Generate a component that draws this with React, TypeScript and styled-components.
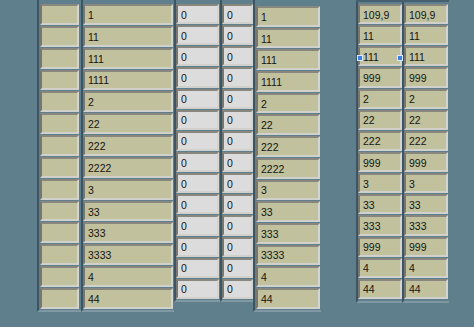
import { createGlobalStyle } from 'styled-components';
import styled from 'styled-components';

const GlobalStyle = createGlobalStyle`
  html, body {
    margin: 0;
    padding: 0;
    background: #5f7f8c;
    font-family: "Liberation Sans", Arial, sans-serif;
  }
`;

type Tone = 'khaki' | 'gray';

const Page = styled.div`
  position: relative;
  display: flex;
  align-items: flex-start;
  width: 474px;
  height: 327px;
  padding-left: 37px;
  box-sizing: border-box;
  overflow: hidden;
`;

const Group = styled.div<{ $top?: boolean; $gapAfter?: number }>`
  display: flex;
  align-items: flex-start;
  border-top: ${(p) => (p.$top ? '2px solid #45606e' : 'none')};
  margin-right: ${(p) => p.$gapAfter ?? 0}px;
`;

const Column = styled.div<{
  $padTop: number;
  $padLeft: number;
  $padRight: number;
  $height: number;
}>`
  display: flex;
  flex-direction: column;
  gap: 1px;
  height: ${(p) => p.$height}px;
  box-sizing: border-box;
  padding: ${(p) => p.$padTop}px ${(p) => p.$padRight}px 0 ${(p) => p.$padLeft}px;
  border-left: 2px solid #3c5564;
  border-bottom: 2px solid #7f98a3;
`;

const Cell = styled.div<{ $tone: Tone; $w: number; $h: number }>`
  width: ${(p) => p.$w}px;
  height: ${(p) => p.$h}px;
  box-sizing: border-box;
  display: flex;
  align-items: center;
  padding: 1px 0 0 3px;
  background: ${(p) => (p.$tone === 'khaki' ? '#c2c19d' : '#dcdcdc')};
  border-top: 2px solid #87877f;
  border-left: 2px solid #77776f;
  border-right: 2px solid #d4d4d0;
  border-bottom: 2px solid #d0d0cc;
  font-size: 10.5px;
  color: #151510;
  white-space: nowrap;
  overflow: hidden;
`;

const Handle = styled.div`
  position: absolute;
  width: 4px;
  height: 4px;
  background: #3b82e0;
  border: 1px solid #d8e8ff;
`;

const labels = ['1', '11', '111', '1111', '2', '22', '222', '2222', '3', '33', '333', '3333', '4', '44'];
const rightLabels = ['109,9', '11', '111', '999', '2', '22', '222', '999', '3', '33', '333', '999', '4', '44'];
const zeros = Array.from({ length: 14 }, () => '0');
const blanks = Array.from({ length: 14 }, () => '');

interface ListProps {
  items: string[];
  tone: Tone;
  w: number;
  h: number;
  padTop: number;
  padLeft: number;
  padRight: number;
  height: number;
}

function List({ items, tone, w, h, padTop, padLeft, padRight, height }: ListProps) {
  return (
    <Column $padTop={padTop} $padLeft={padLeft} $padRight={padRight} $height={height}>
      {items.map((t, i) => (
        <Cell key={i} $tone={tone} $w={w} $h={h}>
          {t}
        </Cell>
      ))}
    </Column>
  );
}

export default function App() {
  return (
    <>
      <GlobalStyle />
      <Page>
        <Group>
          <List items={blanks} tone="khaki" w={39} h={20.85} padTop={4} padLeft={1} padRight={2} height={312} />
          <List items={labels} tone="khaki" w={90} h={20.85} padTop={4} padLeft={0} padRight={1} height={312} />
        </Group>
        <Group>
          <List items={zeros} tone="gray" w={43} h={20.15} padTop={4} padLeft={0} padRight={1} height={302} />
          <List items={zeros} tone="gray" w={31} h={20.15} padTop={4} padLeft={0} padRight={0} height={302} />
        </Group>
        <Group $gapAfter={35}>
          <List items={labels} tone="khaki" w={64} h={20.7} padTop={6} padLeft={1} padRight={1} height={312} />
        </Group>
        <Group $top>
          <List items={rightLabels} tone="khaki" w={44} h={20.15} padTop={2} padLeft={0} padRight={0} height={301} />
          <List items={rightLabels} tone="khaki" w={44} h={20.15} padTop={2} padLeft={0} padRight={1} height={301} />
        </Group>
        <Handle style={{ left: 357, top: 55 }} />
        <Handle style={{ left: 397, top: 55 }} />
      </Page>
    </>
  );
}
